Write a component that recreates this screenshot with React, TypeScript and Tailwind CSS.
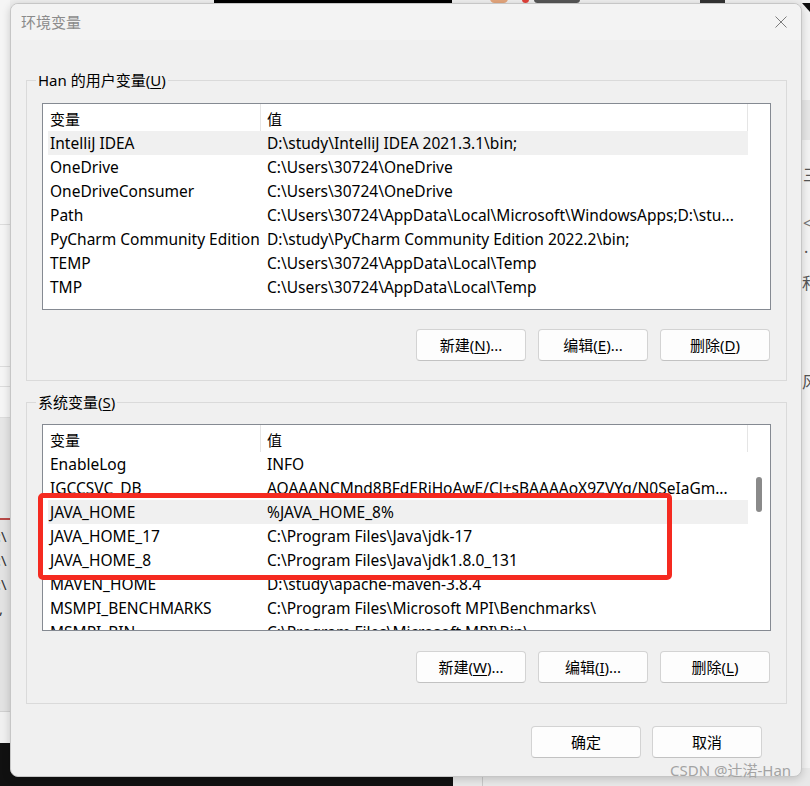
import type { ReactNode } from "react"

type Row = { name: string; value: string; selected?: boolean }

const userRows: Row[] = [
  { name: "IntelliJ IDEA", value: "D:\\study\\IntelliJ IDEA 2021.3.1\\bin;", selected: true },
  { name: "OneDrive", value: "C:\\Users\\30724\\OneDrive" },
  { name: "OneDriveConsumer", value: "C:\\Users\\30724\\OneDrive" },
  { name: "Path", value: "C:\\Users\\30724\\AppData\\Local\\Microsoft\\WindowsApps;D:\\stu..." },
  { name: "PyCharm Community Edition", value: "D:\\study\\PyCharm Community Edition 2022.2\\bin;" },
  { name: "TEMP", value: "C:\\Users\\30724\\AppData\\Local\\Temp" },
  { name: "TMP", value: "C:\\Users\\30724\\AppData\\Local\\Temp" },
]

const systemRows: Row[] = [
  { name: "EnableLog", value: "INFO" },
  { name: "IGCCSVC_DB", value: "AQAAANCMnd8BFdERjHoAwE/Cl+sBAAAAoX9ZVYg/N0SeIaGm..." },
  { name: "JAVA_HOME", value: "%JAVA_HOME_8%", selected: true },
  { name: "JAVA_HOME_17", value: "C:\\Program Files\\Java\\jdk-17" },
  { name: "JAVA_HOME_8", value: "C:\\Program Files\\Java\\jdk1.8.0_131" },
  { name: "MAVEN_HOME", value: "D:\\study\\apache-maven-3.8.4" },
  { name: "MSMPI_BENCHMARKS", value: "C:\\Program Files\\Microsoft MPI\\Benchmarks\\" },
  { name: "MSMPI_BIN", value: "C:\\Program Files\\Microsoft MPI\\Bin\\" },
]

function Btn({ children }: { children: ReactNode }) {
  return (
    <button
      type="button"
      className="flex h-[32px] w-[110px] items-center justify-center rounded-[4px] border border-[#d3d3d3] border-b-[#c2c2c2] bg-[#fdfdfd] text-[15px] leading-none text-black"
    >
      {children}
    </button>
  )
}

function Key({ k }: { k: string }) {
  return <span className="underline underline-offset-2">{k}</span>
}

function VarList({ rows, thumb }: { rows: Row[]; thumb?: boolean }) {
  return (
    <div className="flex h-[207px] overflow-hidden border border-[#858a92] bg-white">
      <div className="flex w-[705px] shrink-0 flex-col">
        {/* header */}
        <div className="ml-[5px] flex h-[27px] shrink-0 text-[15px] text-black">
          <div className="flex w-[213px] items-center border-r border-[#e5e5e5] pl-[2px] pt-[3px]">变量</div>
          <div className="flex flex-1 items-center border-r border-[#e5e5e5] pl-[6px] pt-[3px]">值</div>
        </div>
        {rows.map((r) => (
          <div
            key={r.name}
            className={`ml-[5px] flex h-[24px] shrink-0 items-center pt-[2px] text-[15.5px] text-black ${r.selected ? "bg-[#f0f0f0]" : ""}`}
          >
            <div className="w-[213px] overflow-hidden whitespace-nowrap pl-[2px]">{r.name}</div>
            <div className="flex-1 overflow-hidden whitespace-nowrap pl-[6px]">{r.value}</div>
          </div>
        ))}
      </div>
      <div className="flex-1">
        {thumb && <div className="ml-[8px] mt-[52px] h-[35px] w-[6px] rounded-[3px] bg-[#8a8a8a]" />}
      </div>
    </div>
  )
}

function Group({ label, children }: { label: ReactNode; children: ReactNode }) {
  return (
    <fieldset className="mx-0 border border-[#dadada] px-[15px]">
      <legend className="-ml-[6px] px-[2px] text-[15px] leading-[20px] text-black">{label}</legend>
      {children}
    </fieldset>
  )
}

export default function App() {
  return (
    <div className="relative h-[786px] w-[810px] overflow-hidden bg-[#eeeeee] font-['Noto_Sans','Noto_Sans_CJK_SC',sans-serif]">
      {/* window behind, left edge */}
      <div className="absolute left-0 top-0 flex h-full w-[10px] flex-col bg-[#f5f5f5]">
        <div className="h-[225px] shrink-0 border-b border-[#dcdcdc]" />
        <div className="h-[142px] shrink-0 border-b border-[#dcdcdc]" />
        <div className="h-[20px] shrink-0 border-b border-[#dcdcdc]" />
        <div className="h-[31px] shrink-0 border-b border-[#dcdcdc]" />
        <div className="h-[102px] shrink-0 border-b-2 border-[#b94a48] bg-[#e6e6e6]" />
        <div className="flex h-[192px] shrink-0 flex-col border-b border-[#d0d0d0] bg-[#e2e2e2] pt-[4px] text-[15px] leading-[24px] text-[#333]">
          <span className="-ml-[3px]">:\</span>
          <span className="-ml-[3px]">:\</span>
          <span className="-ml-[3px]">:\</span>
          <span className="-ml-[1px]">,</span>
        </div>
        <div className="h-[31px] shrink-0 bg-[#f0f0f0]" />
        <div className="flex-1 bg-[#111]" />
      </div>

      {/* window behind, top edge */}
      <div className="absolute left-[214px] top-0 h-[8px] w-[238px] bg-black" />
      <div className="absolute left-[490px] top-[-6px] h-[9px] w-[18px] rounded-full bg-[#e3a57c]" />
      <div className="absolute left-[522px] top-[-4px] h-[7px] w-[7px] rounded-full bg-[#e0413a]" />
      <div className="absolute left-[534px] top-[-4px] h-[7px] w-[46px] rounded-full bg-[#555]" />
      <div className="absolute left-[700px] top-0 h-[3px] w-[25px] bg-[#333]" />

      {/* window behind, right edge */}
      <div className="absolute left-[802px] top-0 flex h-full w-[8px] flex-col bg-[#f3f3f3]">
        <svg width="8" height="13" viewBox="0 0 8 13" className="shrink-0">
          <polygon points="0,3 8,3 8,12" fill="#111" />
        </svg>
        <div className="mt-[87px] h-[40px] shrink-0 bg-[#e6e6e6]" />
      </div>
      <span className="absolute left-[803px] top-[163px] text-[16px] text-[#555]">三</span>
      <span className="absolute left-[803px] top-[211px] text-[16px] text-[#777]">&lt;</span>
      <span className="absolute left-[804px] top-[240px] text-[16px] text-[#555]">·</span>
      <span className="absolute left-[802px] top-[271px] text-[16px] text-[#555]">和</span>
      <span className="absolute left-[802px] top-[370px] text-[16px] text-[#555]">风</span>

      {/* bottom edge */}
      <div className="absolute left-0 top-[768px] flex h-[18px] w-full">
        <div className="w-[453px] bg-[#111]" />
        <div className="w-[30px] border-r border-[#c8c8c8] bg-[#e8e8e8]" />
        <div className="flex-1 bg-[#e8e8e8]" />
      </div>

      {/* dialog */}
      <div className="absolute left-[10px] top-[3px] flex h-[774px] w-[792px] flex-col overflow-hidden rounded-[8px] border border-[#c6c6c6] bg-[#f0f0f0] shadow-[0_2px_8px_rgba(0,0,0,0.18)]">
        <div className="flex h-[36px] shrink-0 items-center justify-between bg-[#f3f3f3] pl-[10px] pr-[14px]">
          <span className="pt-[1px] text-[15px] text-[#8b8b8b]">环境变量</span>
          <svg width="12" height="12" viewBox="0 0 12 12" className="-mt-[1px]">
            <path d="M0.5 0.5 L11.5 11.5 M11.5 0.5 L0.5 11.5" stroke="#7c7c7c" strokeWidth="1" fill="none" />
          </svg>
        </div>

        <div className="flex flex-col pl-[15px] pr-[14px] pt-[30px]">
          <Group
            label={
              <>
                Han 的用户变量(<Key k="U" />)
              </>
            }
          >
            <div className="pt-[13px]">
              <VarList rows={userRows} />
            </div>
            <div className="flex justify-end gap-[12px] pb-[19px] pr-[1px] pt-[19px]">
              <Btn>
                新建(<Key k="N" />)...
              </Btn>
              <Btn>
                编辑(<Key k="E" />)...
              </Btn>
              <Btn>
                删除(<Key k="D" />)
              </Btn>
            </div>
          </Group>

          <div className="mt-[11px]">
            <Group
              label={
                <>
                  系统变量(<Key k="S" />)
                </>
              }
            >
              <div className="pt-[12px]">
                <VarList rows={systemRows} thumb />
              </div>
              <div className="flex justify-end gap-[12px] pb-[20px] pr-[1px] pt-[20px]">
                <Btn>
                  新建(<Key k="W" />)...
                </Btn>
                <Btn>
                  编辑(<Key k="I" />)...
                </Btn>
                <Btn>
                  删除(<Key k="L" />)
                </Btn>
              </div>
            </Group>
          </div>

          <div className="flex justify-end gap-[11px] pr-[25px] pt-[22px]">
            <Btn>确定</Btn>
            <Btn>取消</Btn>
          </div>
        </div>
      </div>

      {/* annotation */}
      <div className="absolute left-[38px] top-[493px] h-[87px] w-[634px] rounded-[5px] border-[5px] border-[#f52a20]" />

      {/* watermark */}
      <span className="absolute left-[670px] top-[759px] whitespace-nowrap text-[15px] text-[#a3a3a3]">
        CSDN @辻渃-Han
      </span>
    </div>
  )
}
